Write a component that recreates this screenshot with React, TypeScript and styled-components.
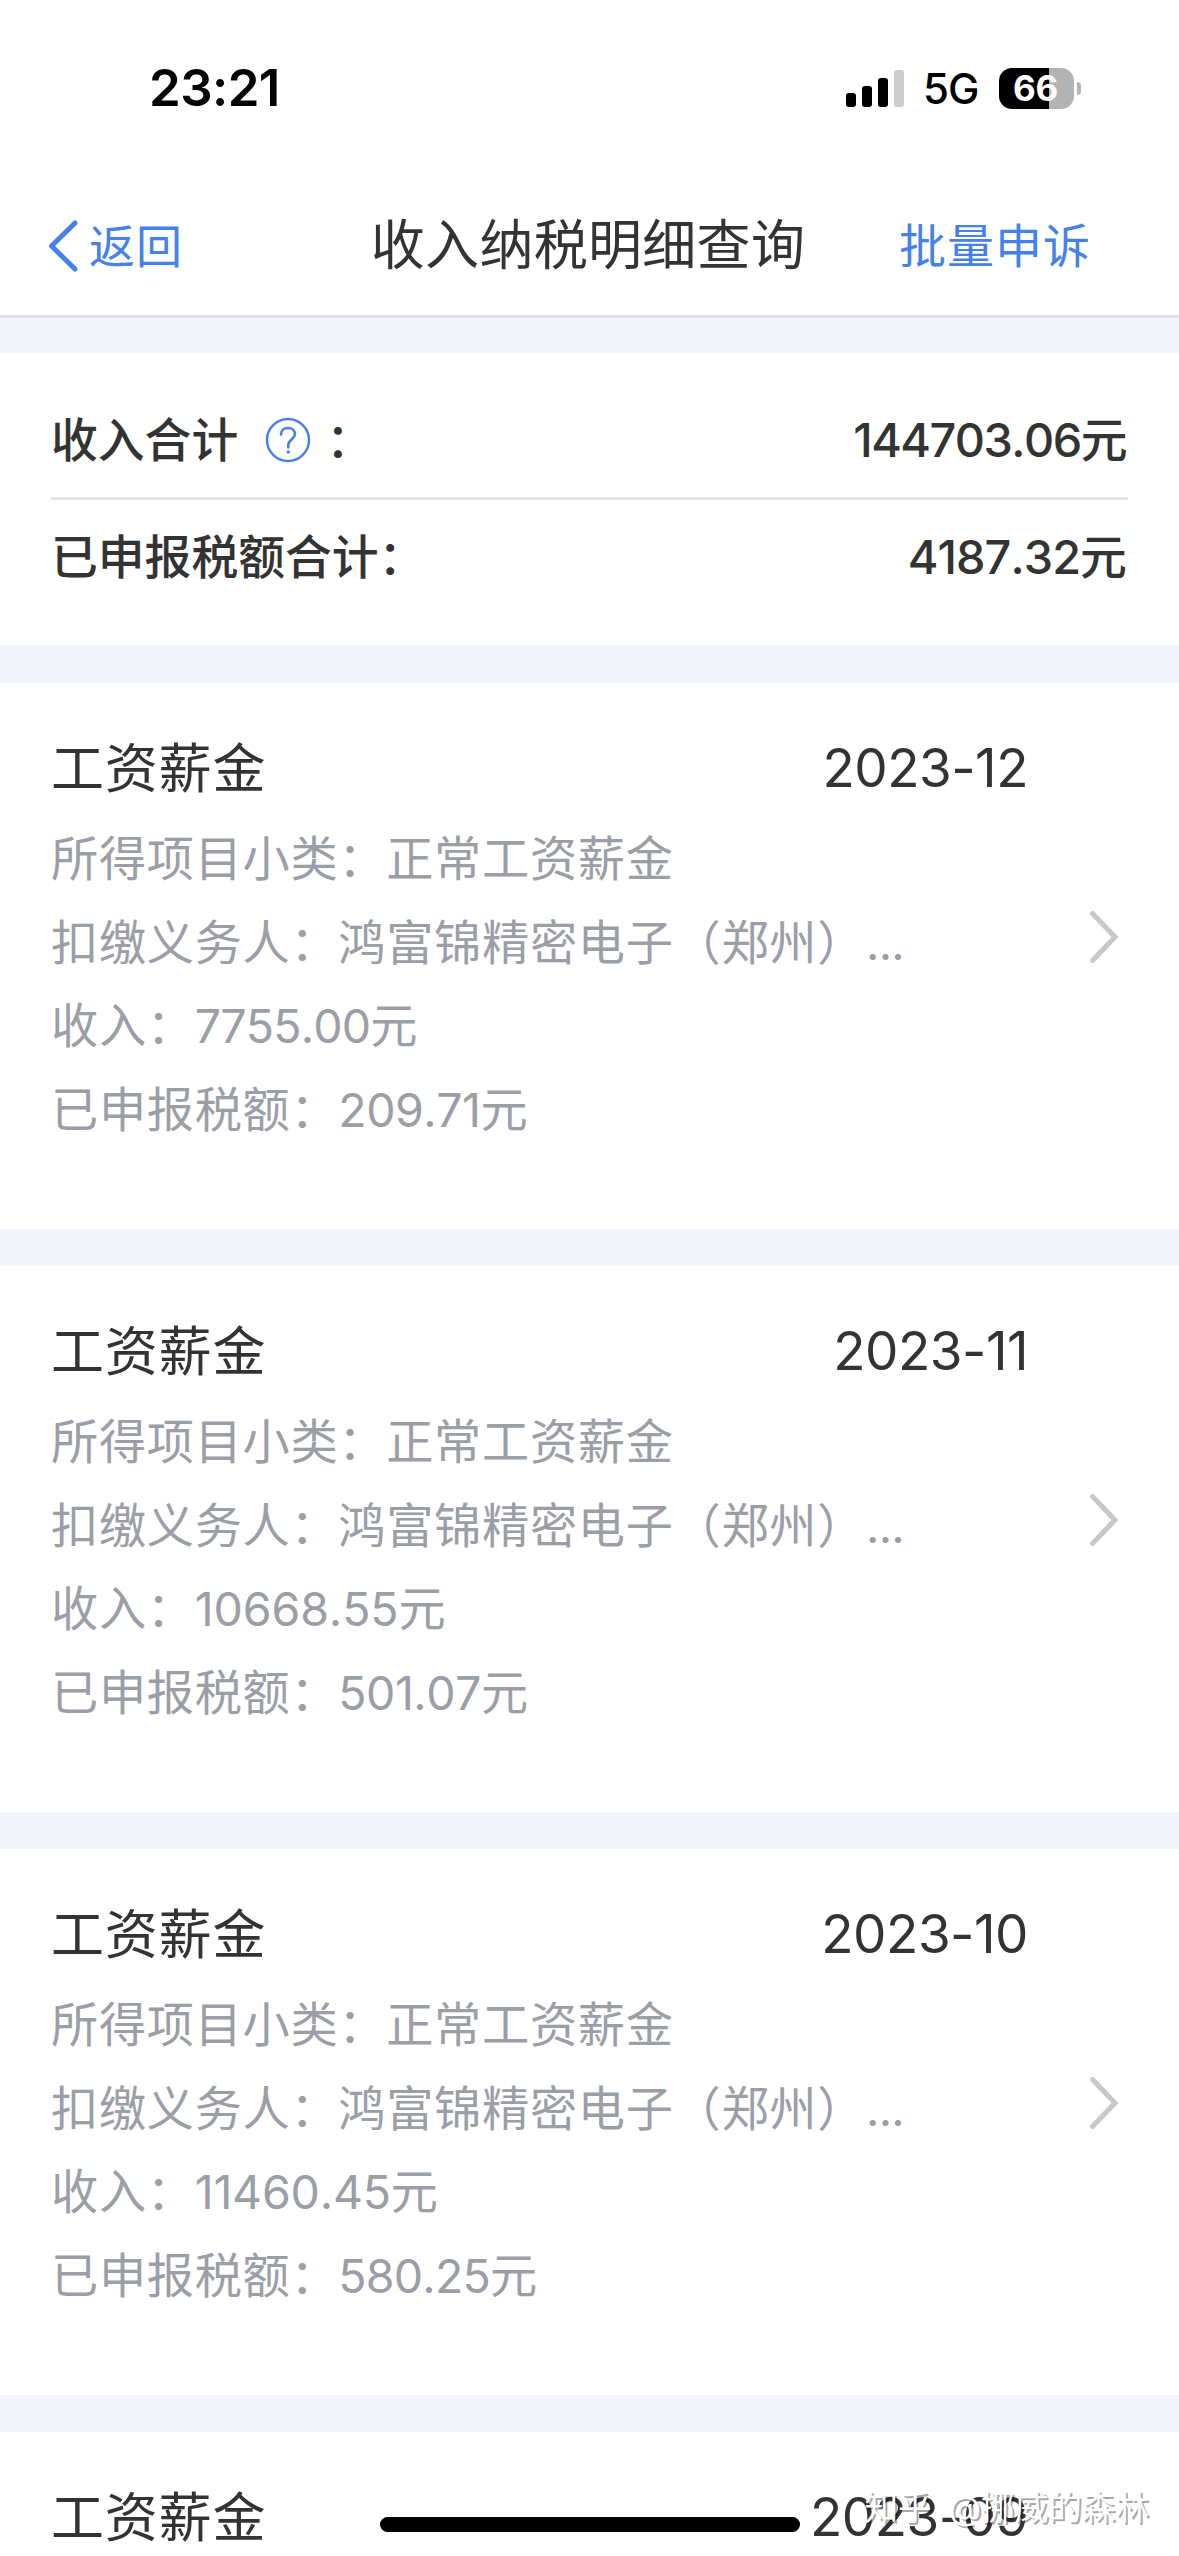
import React from "react";
import styled, { createGlobalStyle } from "styled-components";

const GlobalStyle = createGlobalStyle`
  * { box-sizing: border-box; }
  html, body { margin: 0; padding: 0; background: #f4f5fa; }
  body {
    font-family: Inter, "Noto Sans CJK SC", sans-serif;
    font-kerning: none;
    color: #333333;
  }
`;

const Screen = styled.div`
  position: relative;
  width: 1179px;
  height: 2556px;
  overflow: hidden;
  display: flex;
  flex-direction: column;
  background: #f4f5fa;
`;

const StatusBar = styled.div`
  flex: none;
  height: 176px;
  padding: 0 98px 0 149px;
  display: flex;
  align-items: flex-start;
  justify-content: space-between;
  background: #ffffff;
  color: #000000;
`;

const Time = styled.div`
  margin-top: 58px;
  font-size: 51px;
  line-height: 60px;
  font-weight: 600;
  letter-spacing: -0.6px;
  font-kerning: normal;
`;

const StatusIcons = styled.div`
  height: 60px;
  margin-top: 58px;
  display: flex;
  align-items: center;
`;

const Network = styled.div`
  margin: 2px 0 0 19px;
  width: 76px;
  font-size: 42px;
  line-height: 60px;
  font-weight: 500;
  letter-spacing: -1px;
`;

const Battery = styled.div`
  width: 75px;
  height: 41px;
  border-radius: 13px;
  background: linear-gradient(to right, #000000 50px, #b3b3b3 50px);
  color: #ffffff;
  font-size: 35px;
  line-height: 41px;
  font-weight: 700;
  text-align: center;
  letter-spacing: -0.3px;
  padding-right: 2px;
`;

const BatteryTip = styled.div`
  width: 4px;
  height: 13px;
  margin-left: 3px;
  border-radius: 0 4px 4px 0;
  background: #b3b3b3;
`;

const NavBar = styled.div`
  flex: none;
  height: 142px;
  padding: 0 88px 0 48px;
  display: grid;
  grid-template-columns: 1fr auto 1fr;
  align-items: center;
  background: #ffffff;
  border-bottom: 3px solid #e1e2e8;
`;

const NavAction = styled.div<{ $end?: boolean }>`
  display: flex;
  align-items: center;
  justify-content: ${(p) => (p.$end ? "flex-end" : "flex-start")};
  color: #4581ea;
  font-size: ${(p) => (p.$end ? 47 : 46)}px;
  letter-spacing: 1px;
  line-height: 70px;
  gap: 11px;
  padding-top: 1px;
`;

const NavTitle = styled.div`
  font-size: 54px;
  line-height: 70px;
  letter-spacing: 0.3px;
  margin-left: 37px;
`;

const Summary = styled.div`
  flex: none;
  height: 292px;
  margin-top: 35px;
  padding: 30px 51px 0;
  background: #ffffff;
`;

const SummaryRow = styled.div<{ $divided?: boolean }>`
  height: ${(p) => (p.$divided ? 117 : 113)}px;
  display: flex;
  align-items: center;
  justify-content: space-between;
  font-size: 46.8px;
  line-height: 60px;
  font-weight: 500;
  border-bottom: ${(p) => (p.$divided ? "3px solid #e2e2e2" : "none")};
`;

const SummaryLabel = styled.div`
  display: flex;
  align-items: center;
`;

const HelpIcon = styled.svg`
  margin: 0 15px 0 27px;
`;

const SummaryValue = styled.div<{ $tracking: number }>`
  margin-right: 2px;
  letter-spacing: ${(p) => p.$tracking}px;
`;

const Card = styled.div`
  flex: none;
  height: 546px;
  margin-top: 37px;
  padding: 45px 60px 0 51px;
  display: grid;
  grid-template-columns: 977px 1fr;
  background: #ffffff;
`;

const FirstCard = styled(Card)`
  margin-top: 38px;
`;

const CardHead = styled.div`
  height: 80px;
  margin-bottom: 9px;
  padding-top: 1px;
  display: flex;
  align-items: center;
  justify-content: space-between;
  font-size: 53px;
  line-height: 80px;
  letter-spacing: 0.8px;
`;

const Period = styled.span`
  font-size: 53px;
  letter-spacing: -0.5px;
  margin-bottom: 1px;
`;

const Detail = styled.div`
  height: 83.5px;
  font-size: 47.2px;
  line-height: 83px;
  letter-spacing: 0.7px;
  white-space: nowrap;
  color: #9b9ea6;
`;

const Amount = styled.span<{ $tracking?: number }>`
  font-size: 46.5px;
  line-height: 1;
  letter-spacing: ${(p) => p.$tracking ?? -0.8}px;
`;

const Ellipsis = styled(Amount)`
  margin-left: 1px;
`;

const CardArrow = styled.div`
  display: flex;
  justify-content: flex-end;
  padding-top: 180px;
`;

const HomeIndicator = styled.div`
  position: absolute;
  left: 380px;
  bottom: 24px;
  width: 420px;
  height: 15px;
  border-radius: 8px;
  background: #000000;
`;

const Watermark = styled.div`
  position: absolute;
  right: 30px;
  bottom: 26px;
  display: flex;
  gap: 17px;
  font-size: 33.6px;
  line-height: 44px;
  color: #ffffff;
  text-shadow: 2px 2px 0.5px rgba(0, 0, 0, 0.34);
`;

type Entry = {
  period: string;
  income: string;
  tax: string;
  incomeTracking?: number;
  taxTracking?: number;
};

const entries: Entry[] = [
  { period: "2023-12", income: "7755.00", tax: "209.71", taxTracking: -0.5 },
  {
    period: "2023-11",
    income: "10668.55",
    tax: "501.07",
    incomeTracking: -0.1,
    taxTracking: -0.5,
  },
  {
    period: "2023-10",
    income: "11460.45",
    tax: "580.25",
    incomeTracking: -0.2,
  },
  { period: "2023-09", income: "", tax: "" },
];

function Signal() {
  return (
    <svg width="58" height="37" viewBox="0 0 58 37">
      <rect x="0" y="23" width="10" height="14" rx="3" />
      <rect x="16" y="16" width="10" height="21" rx="3" />
      <rect x="32" y="8" width="10" height="29" rx="3" />
      <rect x="48" y="0" width="10" height="37" rx="3" fill="#cccccc" />
    </svg>
  );
}

function EntryCard({ entry, first }: { entry: Entry; first: boolean }) {
  const Box = first ? FirstCard : Card;
  return (
    <Box>
      <div>
        <CardHead>
          <span>工资薪金</span>
          <Period>{entry.period}</Period>
        </CardHead>
        {entry.income && (
          <>
            <Detail>所得项目小类：正常工资薪金</Detail>
            <Detail>
              扣缴义务人：鸿富锦精密电子（郑州）<Ellipsis>...</Ellipsis>
            </Detail>
            <Detail>
              收入：
              <Amount $tracking={entry.incomeTracking}>{entry.income}</Amount>元
            </Detail>
            <Detail>
              已申报税额：
              <Amount $tracking={entry.taxTracking}>{entry.tax}</Amount>元
            </Detail>
          </>
        )}
      </div>
      {entry.income && (
        <CardArrow>
          <svg width="32" height="58" viewBox="0 0 32 58" fill="none">
            <path
              d="M5.5 5.5 L28 29 L5.5 52.5"
              stroke="#c8c8cb"
              strokeWidth="5"
              strokeLinecap="round"
            />
          </svg>
        </CardArrow>
      )}
    </Box>
  );
}

export default function App() {
  return (
    <>
      <GlobalStyle />
      <Screen>
        <StatusBar>
          <Time>23:21</Time>
          <StatusIcons>
            <Signal />
            <Network>5G</Network>
            <Battery>66</Battery>
            <BatteryTip />
          </StatusIcons>
        </StatusBar>
        <NavBar>
          <NavAction>
            <svg width="30" height="54" viewBox="0 0 30 54" fill="none">
              <path
                d="M27 4 L3.5 27 L27 50"
                stroke="#4581ea"
                strokeWidth="5"
                strokeLinecap="round"
                strokeLinejoin="round"
              />
            </svg>
            返回
          </NavAction>
          <NavTitle>收入纳税明细查询</NavTitle>
          <NavAction $end>批量申诉</NavAction>
        </NavBar>
        <Summary>
          <SummaryRow $divided>
            <SummaryLabel>
              收入合计
              <HelpIcon width="46" height="46" viewBox="0 0 46 46" fill="none">
                <circle cx="23" cy="23" r="21" stroke="#4581ea" strokeWidth="2.4" />
                <path
                  d="M16 17.5 C16 13.5 19 11 23 11 C27 11 30 13.5 30 17 C30 22 23.2 22.5 23.2 28.5 V30.5"
                  stroke="#4581ea"
                  strokeWidth="2.6"
                  strokeLinecap="round"
                />
                <circle cx="23.2" cy="35" r="1.7" fill="#4581ea" />
              </HelpIcon>
              ：
            </SummaryLabel>
            <SummaryValue $tracking={-1.5}>144703.06元</SummaryValue>
          </SummaryRow>
          <SummaryRow>
            <SummaryLabel>已申报税额合计：</SummaryLabel>
            <SummaryValue $tracking={-0.9}>4187.32元</SummaryValue>
          </SummaryRow>
        </Summary>
        {entries.map((entry, i) => (
          <EntryCard key={entry.period} entry={entry} first={i === 0} />
        ))}
        <HomeIndicator />
        <Watermark>
          <span>知乎</span>
          <span>@挪威的森林</span>
        </Watermark>
      </Screen>
    </>
  );
}
